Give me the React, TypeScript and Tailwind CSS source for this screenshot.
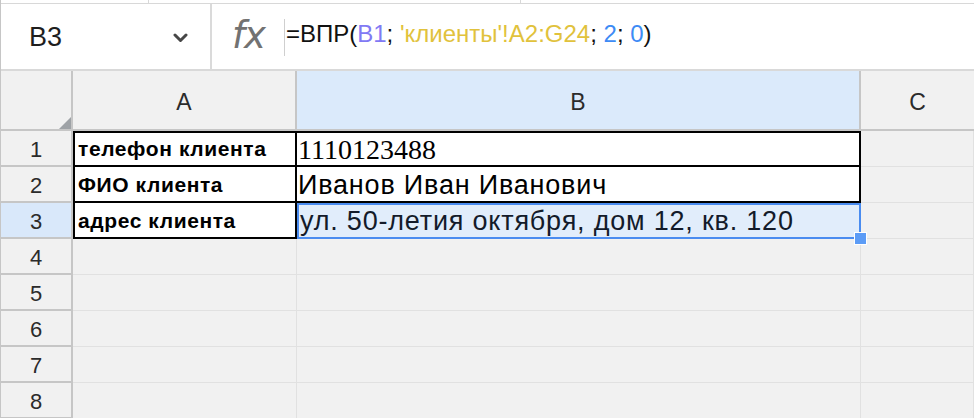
import React from "react";

const sans = "font-['Liberation_Sans',Arial,sans-serif]";

function RowHead({ n, sel }: { n: number; sel?: boolean }) {
  return (
    <div
      className={`flex items-center justify-center pt-[3px] border-r-2 border-b-2 border-[#c6c6c6] text-[22px] text-[#2b2b2b] ${
        sel ? "bg-[#d9e8fa]" : "bg-[#f1f1f1]"
      }`}
    >
      {n}
    </div>
  );
}

function Empty() {
  return <div className="bg-[#f1f1f1] border-r border-b border-[#e1e1e1]" />;
}

export default function App() {
  const rows: { a: string; b: React.ReactNode; serif?: boolean }[] = [
    { a: "телефон клиента", b: "1110123488", serif: true },
    { a: "ФИО клиента", b: "Иванов Иван Иванович" },
    { a: "адрес клиента", b: "ул. 50-летия октября, дом 12, кв. 120" },
  ];

  return (
    <div className={`w-[974px] h-[418px] overflow-hidden bg-[#f1f1f1] border-l border-[#c6c6c6] ${sans}`}>
      {/* top strip */}
      <div className="h-[4px] bg-white border-b border-[#d8d8d8] flex">
        <div className="w-[147px]" />
        <div className="w-px bg-[#d8d8d8]" />
        <div className="w-[371px]" />
        <div className="w-px bg-[#d8d8d8]" />
      </div>

      {/* formula bar */}
      <div className="h-[67px] bg-white border-b-2 border-[#d9d9d9] flex">
        <div className="w-[209px] flex items-center pl-[28px] pr-[22px] justify-between">
          <span className="text-[27px] text-[#1e1e1e] pt-[2px]">B3</span>
          <svg width="15" height="10" viewBox="0 0 15 10" className="mt-[2px]">
            <path d="M2 2 L7.5 7.5 L13 2" fill="none" stroke="#474747" strokeWidth="3" strokeLinecap="round" strokeLinejoin="round" />
          </svg>
        </div>
        <div className="w-[2px] bg-[#dadada]" />
        <div className="flex items-center pl-[20px]">
          <span className="italic text-[37px] text-[#727272] tracking-[-1px] leading-none mb-[2px] font-['DejaVu_Sans',sans-serif] font-light">
            fx
          </span>
        </div>
        <div className="flex items-center pl-[19px]">
          <div className="w-px h-[37px] bg-[#cfcfcf] mt-[2px]" />
          <span className="pl-[1px] text-[24px] text-[#111] whitespace-nowrap pb-[5px]">
            =ВПР(<span className="text-[#8179f4]">B1</span>;{" "}
            <span className="text-[#e1c23c]">'клиенты'!A2:G24</span>;{" "}
            <span className="text-[#3d8bf5]">2</span>; <span className="text-[#3d8bf5]">0</span>)
          </span>
        </div>
      </div>

      {/* grid */}
      <div className="grid grid-cols-[72px_224px_564px_1fr] grid-rows-[60px_36px_36px_36px_36px_36px_36px_36px_36px]">
        {/* header */}
        <div className="relative bg-[#f1f1f1] border-r-2 border-b-2 border-[#c6c6c6]">
          <div className="absolute right-0 bottom-0 w-[12px] h-[12px] bg-[#9ea2a6] [clip-path:polygon(100%_0,100%_100%,0_100%)]" />
        </div>
        <div className="flex items-center justify-center pt-[4px] bg-[#f1f1f1] border-r-2 border-b-2 border-[#c6c6c6] text-[23px] text-[#2b2b2b]">A</div>
        <div className="flex items-center justify-center pt-[4px] bg-[#dbeafb] border-r-2 border-b-2 border-[#c6c6c6] text-[23px] text-[#2b2b2b]">B</div>
        <div className="flex items-center justify-center pt-[4px] bg-[#f1f1f1] border-b-2 border-[#c6c6c6] text-[23px] text-[#2b2b2b]">C</div>

        {rows.map((r, i) => (
          <React.Fragment key={i}>
            <RowHead n={i + 1} sel={i === 2} />
            <div
              className={`flex items-end pl-[3px] pb-[6px] bg-white border-l-2 border-r-2 border-b-2 border-black text-[21px] tracking-[0.6px] font-bold text-black leading-none whitespace-nowrap ${
                i === 0 ? "border-t-2" : ""
              }`}
            >
              {r.a}
            </div>
            {i === 2 ? (
              <div className="relative flex items-end pl-[1px] pb-[2px] bg-[#e1edfb] border-2 border-[#4a8cf0] text-[27px] tracking-[0.8px] text-[#131b2a] leading-none whitespace-nowrap">
                {r.b}
                <div className="absolute -right-[8px] -bottom-[8px] w-[13px] h-[13px] bg-[#5c9cf6] border border-white z-10" />
              </div>
            ) : (
              <div
                className={`flex items-end pl-[1px] bg-white border-r-2 border-b-2 border-black leading-none whitespace-nowrap text-black ${
                  i === 0 ? "border-t-2" : ""
                } ${r.serif ? "font-['Liberation_Serif',serif] text-[28px] pb-[1px]" : "text-[27px] tracking-[0.8px] pb-[2px]"}`}
              >
                {r.b}
              </div>
            )}
            <Empty />
          </React.Fragment>
        ))}

        {[4, 5, 6, 7, 8].map((n) => (
          <React.Fragment key={n}>
            <RowHead n={n} />
            <Empty />
            <Empty />
            <Empty />
          </React.Fragment>
        ))}
      </div>
    </div>
  );
}
